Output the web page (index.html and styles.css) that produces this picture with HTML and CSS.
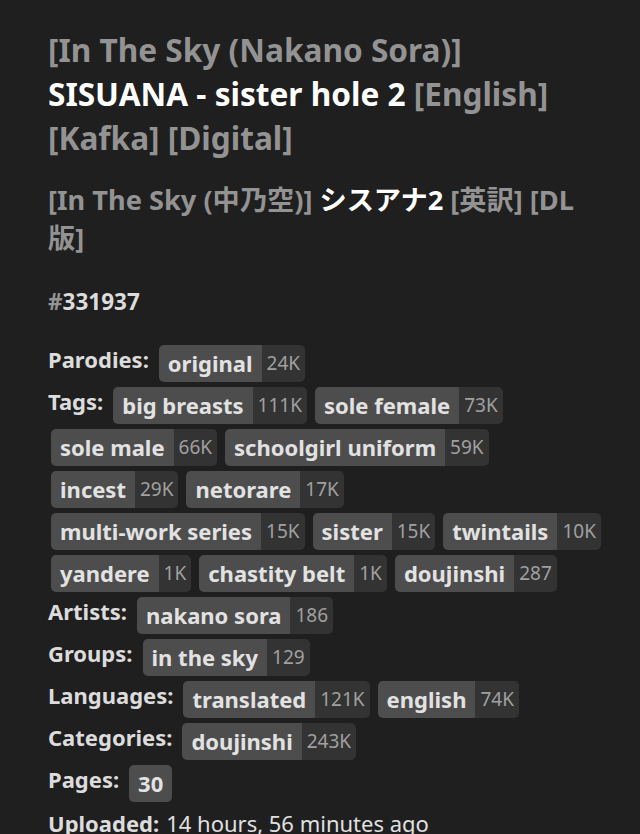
FILE: index.html
```html
<!DOCTYPE html>
<html>
<head>
<meta charset="utf-8">
<link rel="stylesheet" href="styles.css">
</head>
<body>
<div class="info">
  <h1 class="title"><span class="before">[In The Sky (Nakano Sora)]</span> <span class="pretty">SISUANA - sister hole 2</span> <span class="after">[English] [Kafka] [Digital]</span></h1>
  <h2 class="title sub"><span class="before">[In The Sky (中乃空)]</span> <span class="pretty">シスアナ2</span> <span class="after">[英訳] [DL版]</span></h2>
  <h3 class="gid"><span class="hash">#</span>331937</h3>
  <section class="tags">
    <div class="row"><span class="label">Parodies:</span><a class="tag"><span class="name">original</span><span class="count">24K</span></a></div>
    <div class="row"><span class="label">Tags:</span><a class="tag"><span class="name">big breasts</span><span class="count">111K</span></a><a class="tag"><span class="name">sole female</span><span class="count">73K</span></a><a class="tag"><span class="name">sole male</span><span class="count">66K</span></a><a class="tag"><span class="name">schoolgirl uniform</span><span class="count">59K</span></a><a class="tag"><span class="name">incest</span><span class="count">29K</span></a><a class="tag"><span class="name">netorare</span><span class="count">17K</span></a><a class="tag"><span class="name">multi-work series</span><span class="count">15K</span></a><a class="tag"><span class="name">sister</span><span class="count">15K</span></a><a class="tag"><span class="name">twintails</span><span class="count">10K</span></a><a class="tag"><span class="name">yandere</span><span class="count">1K</span></a><a class="tag"><span class="name">chastity belt</span><span class="count">1K</span></a><a class="tag"><span class="name">doujinshi</span><span class="count">287</span></a></div>
    <div class="row"><span class="label">Artists:</span><a class="tag"><span class="name">nakano sora</span><span class="count">186</span></a></div>
    <div class="row"><span class="label">Groups:</span><a class="tag"><span class="name">in the sky</span><span class="count">129</span></a></div>
    <div class="row"><span class="label">Languages:</span><a class="tag"><span class="name">translated</span><span class="count">121K</span></a><a class="tag"><span class="name">english</span><span class="count">74K</span></a></div>
    <div class="row"><span class="label">Categories:</span><a class="tag"><span class="name">doujinshi</span><span class="count">243K</span></a></div>
    <div class="row"><span class="label">Pages:</span><a class="tag"><span class="name">30</span></a></div>
    <div class="row meta"><span class="label">Uploaded:</span><span class="time">14 hours, 56 minutes ago</span></div>
  </section>
</div>
</body>
</html>
```

FILE: styles.css
```css
html, body {
  margin: 0;
  padding: 0;
  background: #1f1f1f;
  color: #d9d9d9;
  font-family: "Noto Sans", "Noto Sans CJK JP", sans-serif;
}
.info {
  padding: 28px 39px 0 48px;
}
.title {
  margin: 0;
  font-size: 31.6px;
  line-height: 44px;
  font-weight: 700;
  color: #939393;
}
.title .pretty {
  color: #ffffff;
}
.sub {
  margin-top: 21px;
  font-size: 27.2px;
  line-height: 38px;
}
.gid {
  margin: 29px 0 0;
  font-size: 22.5px;
  line-height: 32px;
  font-weight: 700;
  color: #dcdcdc;
}
.gid .hash {
  color: #939393;
}
.tags {
  margin-top: 27px;
  display: flex;
  flex-direction: column;
  gap: 5px;
}
.row {
  display: flex;
  flex-wrap: wrap;
  align-items: flex-start;
  column-gap: 5px;
  row-gap: 5px;
}
.label {
  font-size: 22px;
  font-weight: 700;
  line-height: 29px;
  margin-right: 2px;
  color: #dcdcdc;
}
.meta .label {
  line-height: 32px;
}
.tag {
  display: flex;
  height: 37px;
  margin-left: 3px;
  border-radius: 5px;
  overflow: hidden;
}
.name {
  background: #4d4d4d;
  color: #e2e2e2;
  font-size: 22px;
  font-weight: 700;
  line-height: 37px;
  padding: 0 9px;
}
.count {
  background: #333333;
  color: #a0a0a0;
  font-size: 19px;
  line-height: 37px;
  padding: 0 5px;
}
.time {
  font-size: 22px;
  line-height: 32px;
  color: #e0e0e0;
}
```
